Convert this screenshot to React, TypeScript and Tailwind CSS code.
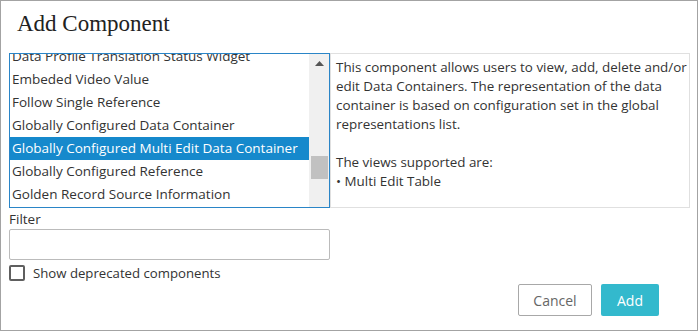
const ITEMS = [
  "Data Profile Translation Status Widget",
  "Embeded Video Value",
  "Follow Single Reference",
  "Globally Configured Data Container",
  "Globally Configured Multi Edit Data Container",
  "Globally Configured Reference",
  "Golden Record Source Information",
  "Hierarchy Visualization Widget",
];

const SELECTED = "Globally Configured Multi Edit Data Container";

export default function App() {
  return (
    <div className="flex h-[331px] w-[698px] flex-col border border-[#a3a3a3] bg-white font-['Open_Sans',sans-serif] text-[#333]">
      {/* Header */}
      <h1 className="pl-[16px] pt-[9px] font-['Liberation_Serif',serif] text-[23px] leading-[28px] text-[#222]">
        Add Component
      </h1>

      <div className="mt-[15px] flex pl-[8px] pr-[7px]">
        {/* Left column */}
        <div className="flex w-[321px] shrink-0 flex-col">
          <div className="flex h-[155px] border border-[#2a85c7]">
            <ul className="min-w-0 flex-1 overflow-hidden">
              <div className="-mt-[9px]">
                {ITEMS.map((item) => (
                  <li
                    key={item}
                    className={`h-[23px] whitespace-nowrap pl-[2px] text-[13.5px] leading-[22px] ${
                      item === SELECTED ? "bg-[#1689cc] text-white" : ""
                    }`}
                  >
                    {item}
                  </li>
                ))}
              </div>
            </ul>
            {/* Scrollbar */}
            <div className="flex w-[20px] shrink-0 flex-col bg-[#f0f0f0] pt-[7px]">
              <svg width="9" height="5" viewBox="0 0 9 5" className="ml-[6px]">
                <path d="M0 5 L4.5 0 L9 5 Z" fill="#555" />
              </svg>
              <div className="ml-[2px] mt-[90px] h-[23px] w-[17px] bg-[#c1c1c1]" />
            </div>
          </div>

          <span className="mt-[2px] text-[13.5px] leading-[19px]">Filter</span>
          <input className="h-[31px] w-full rounded-[2px] border border-[#bbb] outline-none" />

          <div className="mt-[5px] flex items-center gap-[8px] text-[13.2px] leading-[16px]">
            <span className="h-[16px] w-[16px] rounded-[2px] border-2 border-[#5f5f5f]" />
            <span>Show deprecated components</span>
          </div>
        </div>

        {/* Description */}
        <div className="h-[155px] w-[360px] shrink-0 overflow-hidden whitespace-nowrap border border-[#e0e0e0] pl-[5px] pt-[4px] text-[13.4px] leading-[19px]">
          <p>
            This component allows users to view, add, delete and/or
            <br />
            edit Data Containers. The representation of the data
            <br />
            container is based on configuration set in the global
            <br />
            representations list.
          </p>
          <p className="h-[19px]" />
          <p>The views supported are:</p>
          <p>• Multi Edit Table</p>
        </div>
      </div>

      {/* Footer */}
      <div className="mt-auto mb-[14px] flex justify-end gap-[9px] pr-[38px]">
        <button className="h-[32px] w-[74px] rounded-[2px] border border-[#a8a8a8] bg-white text-[14px] text-[#666]">
          Cancel
        </button>
        <button className="h-[32px] w-[58px] rounded-[2px] bg-[#33b9cd] text-[14px] text-white">
          Add
        </button>
      </div>
    </div>
  );
}
